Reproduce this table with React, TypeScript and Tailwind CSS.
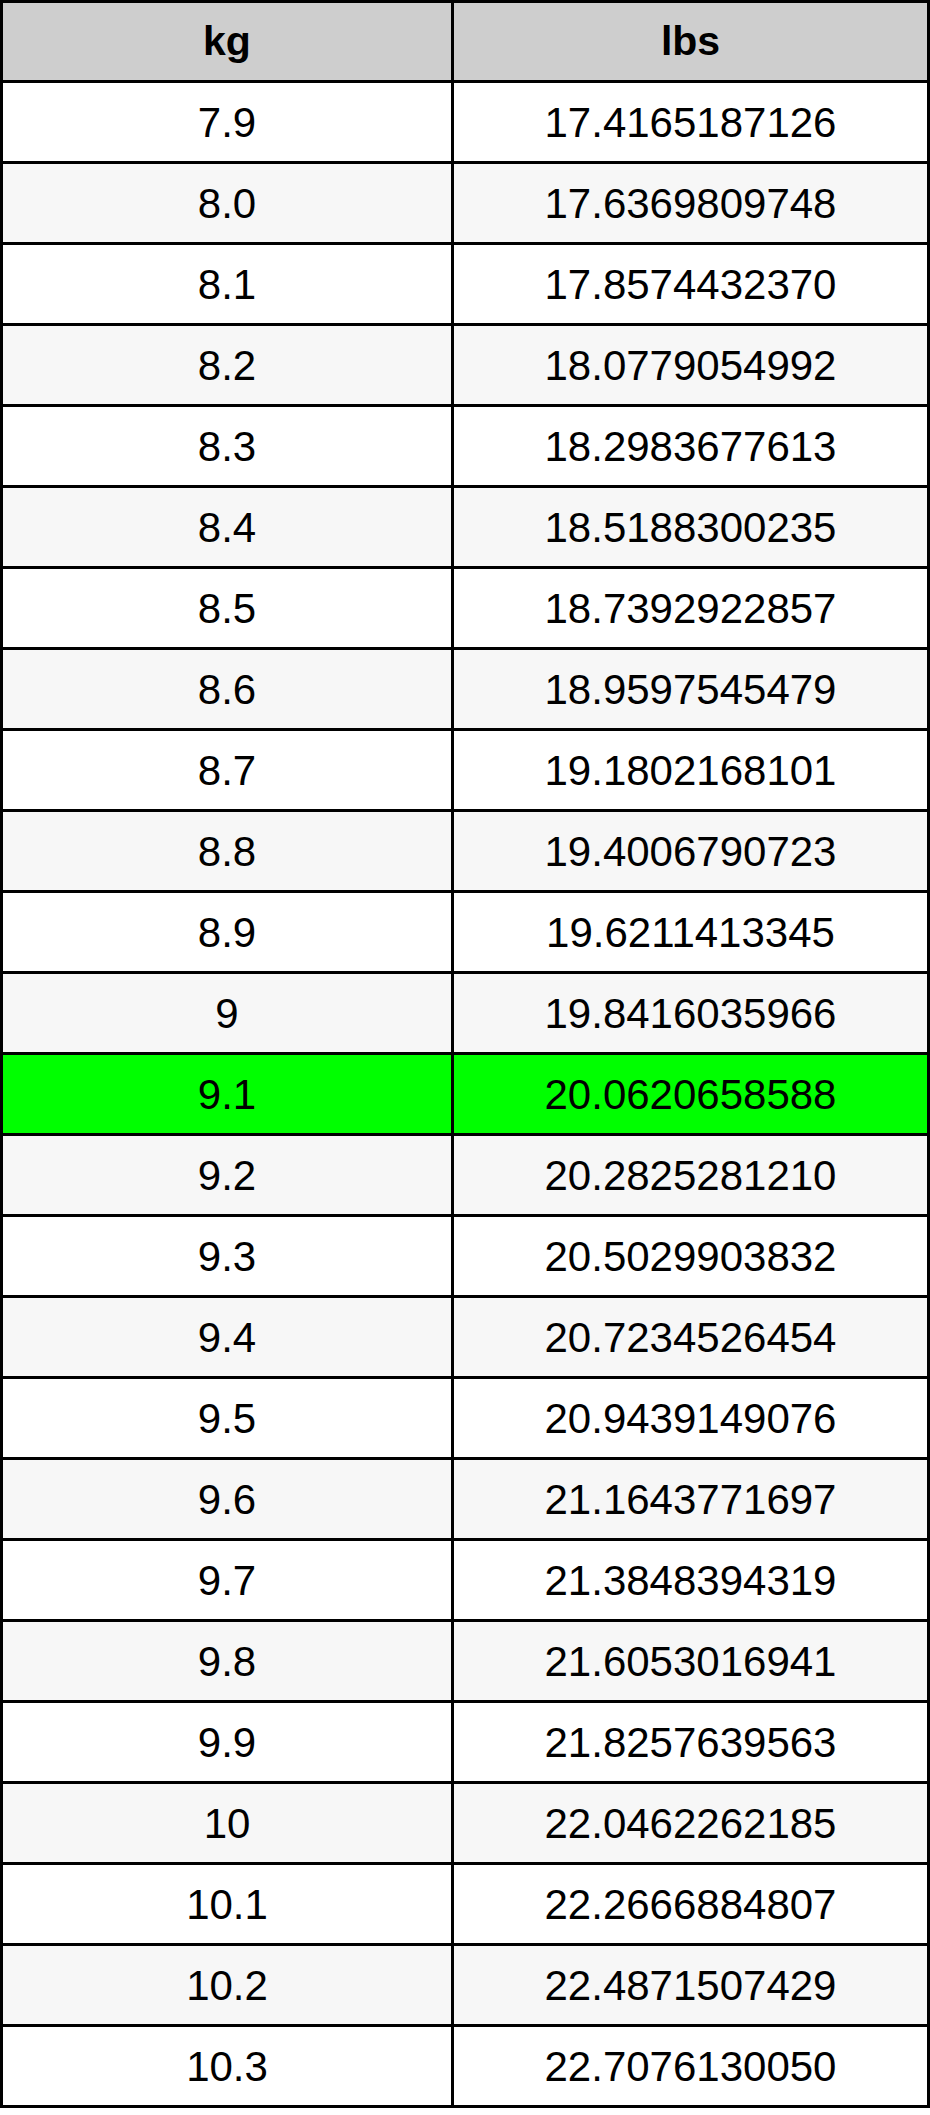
const rows: [string, string][] = [
  ["7.9", "17.4165187126"],
  ["8.0", "17.6369809748"],
  ["8.1", "17.8574432370"],
  ["8.2", "18.0779054992"],
  ["8.3", "18.2983677613"],
  ["8.4", "18.5188300235"],
  ["8.5", "18.7392922857"],
  ["8.6", "18.9597545479"],
  ["8.7", "19.1802168101"],
  ["8.8", "19.4006790723"],
  ["8.9", "19.6211413345"],
  ["9", "19.8416035966"],
  ["9.1", "20.0620658588"],
  ["9.2", "20.2825281210"],
  ["9.3", "20.5029903832"],
  ["9.4", "20.7234526454"],
  ["9.5", "20.9439149076"],
  ["9.6", "21.1643771697"],
  ["9.7", "21.3848394319"],
  ["9.8", "21.6053016941"],
  ["9.9", "21.8257639563"],
  ["10", "22.0462262185"],
  ["10.1", "22.2666884807"],
  ["10.2", "22.4871507429"],
  ["10.3", "22.7076130050"],
];

const App = () => {
  return (
    <div className="w-[930px] bg-white font-['Liberation_Sans',Arial,sans-serif] text-black">
      <div className="grid grid-cols-[448px_473px] gap-[3px] p-[3px] bg-black">
        {/* header */}
        <div className="h-[77px] bg-[#cecece] flex items-center justify-center text-[41px] font-bold">
          kg
        </div>
        <div className="h-[77px] bg-[#cecece] flex items-center justify-center text-[41px] font-bold">
          lbs
        </div>

        {rows.map(([kg, lbs], i) => {
          const bg =
            kg === "9.1" ? "bg-[#00ff00]" : i % 2 === 1 ? "bg-[#f7f7f7]" : "bg-white";
          return [
            <div
              key={kg + "-kg"}
              className={`h-[78px] ${bg} flex items-center justify-center text-[42px]`}
            >
              {kg}
            </div>,
            <div
              key={kg + "-lbs"}
              className={`h-[78px] ${bg} flex items-center justify-center text-[42px]`}
            >
              {lbs}
            </div>,
          ];
        })}
      </div>
    </div>
  );
};

export default App;
